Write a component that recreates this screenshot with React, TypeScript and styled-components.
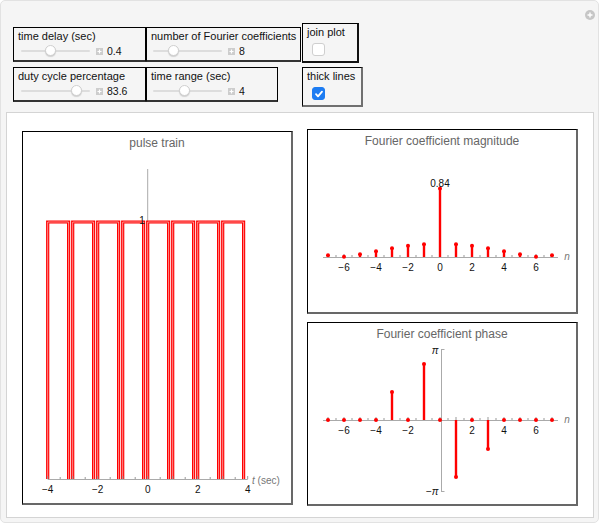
import styled, { createGlobalStyle } from "styled-components";

const GlobalStyle = createGlobalStyle`
  body {
    margin: 0;
    background: #ffffff;
    font-family: "Liberation Sans", Arial, sans-serif;
  }
`;

const DUTY = 0.836;

type SliderProps = { label: string; value: string; pos: number; w: number; pad: number };

function Slider({ label, value, pos, w, pad }: SliderProps) {
  return (
    <ControlBox $w={w}>
      <Label>{label}</Label>
      <SliderRow $pad={pad}>
        <Track>
          <Thumb style={{ left: `${pos * 100}%` }} />
        </Track>
        <PlusBox>
          <svg width="7" height="7" viewBox="0 0 7 7">
            <path d="M3.5 1.5v4M1.5 3.5h4" stroke="#fff" strokeWidth="1.2" />
          </svg>
        </PlusBox>
        <Value>{value}</Value>
      </SliderRow>
    </ControlBox>
  );
}

function Toggle({ label, checked, w, h, muted }: { label: string; checked: boolean; w: number; h: number; muted?: boolean }) {
  return (
    <CheckFrame $w={w} $h={h} $muted={muted}>
      <Label>{label}</Label>
      <Check $on={checked}>
        {checked && (
          <svg width="10" height="10" viewBox="0 0 10 10">
            <path d="M2 5.2l2 2.2 4-4.8" fill="none" stroke="#fff" strokeWidth="1.8" strokeLinecap="round" strokeLinejoin="round" />
          </svg>
        )}
      </Check>
    </CheckFrame>
  );
}

function PulseTrain() {
  const x0 = 124.7, ts = 25, y0 = 327, y1 = 70;
  const tx = (t: number) => x0 + t * ts;
  // one open box per period, the low part sits on the axis
  let d = "";
  for (let k = -4; k <= 3; k++) {
    d += ` M${tx(k)},${y0} L${tx(k)},${y1} L${tx(k + DUTY)},${y1} L${tx(k + DUTY)},${y0}`;
  }
  const ticks: number[] = [];
  for (let t = -4; t <= 4; t += 0.5) ticks.push(t);
  return (
    <svg width="268" height="351">
      <line x1={tx(0)} y1="17" x2={tx(0)} y2={y0} stroke="#aaa" />
      <path d={d} fill="none" stroke="#ff0000" strokeWidth="3.2" strokeLinejoin="miter" />
      <path d={d} fill="none" stroke="#ffb4b4" strokeWidth="0.8" />
      <line x1={tx(-4)} y1={y0 + 0.5} x2={tx(4)} y2={y0 + 0.5} stroke="#aaa" />
      {ticks.map((t) => (
        <line key={t} x1={tx(t)} y1={y0} x2={tx(t)} y2={y0 - (Number.isInteger(t) ? 3 : 2)} stroke="#999" />
      ))}
      <AxisText x={tx(0) - 3} y={y1 + 2} textAnchor="end" fontSize="9">1</AxisText>
      {[-4, -2, 0, 2, 4].map((t) => (
        <AxisText key={t} x={tx(t)} y="341" textAnchor="middle">
          {t < 0 ? `−${-t}` : t}
        </AxisText>
      ))}
      <AxisName x="229" y="332">
        <tspan fontStyle="italic">t</tspan> (sec)
      </AxisName>
    </svg>
  );
}

const NS = [-7, -6, -5, -4, -3, -2, -1, 0, 1, 2, 3, 4, 5, 6, 7];
const nx = (n: number) => 132 + n * 16;

function AxisN({ y, labels }: { y: number; labels: number[] }) {
  const ticks: number[] = [];
  for (let n = -7; n <= 7.4; n += 0.5) ticks.push(n);
  return (
    <g>
      <line x1="15" y1={y + 0.5} x2="250" y2={y + 0.5} stroke="#aaa" />
      {ticks.map((n) => (
        <line key={n} x1={nx(n)} y1={y} x2={nx(n)} y2={y - (Number.isInteger(n) ? 3 : 2)} stroke="#999" />
      ))}
      {labels.map((n) => (
        <AxisText key={n} x={nx(n)} y={y + 14} textAnchor="middle">
          {n < 0 ? `−${-n}` : n}
        </AxisText>
      ))}
      <AxisName x="259" y={y + 3} fontStyle="italic" textAnchor="middle">n</AxisName>
    </g>
  );
}

function Magnitude() {
  const ay = 107, scale = 82;
  const mag = (n: number) => (n === 0 ? DUTY : Math.abs(Math.sin(Math.PI * n * DUTY)) / (Math.PI * Math.abs(n)));
  return (
    <svg width="268" height="162">
      <AxisN y={ay} labels={[-6, -4, -2, 0, 2, 4, 6]} />
      {NS.map((n) => {
        const top = ay - mag(n) * scale;
        return (
          <g key={n}>
            <line x1={nx(n)} y1={ay} x2={nx(n)} y2={top} stroke="#ff0000" strokeWidth="2.4" />
            <circle cx={nx(n)} cy={top} r="2" fill="#ff0000" />
          </g>
        );
      })}
      <AxisText x={nx(0)} y="37" textAnchor="middle">0.84</AxisText>
    </svg>
  );
}

const PHASE: Record<number, number> = { [-3]: 28, [-1]: 56, 1: -57, 3: -29 };

function Phase() {
  const ay = 77, yx = 133.5;
  return (
    <svg width="268" height="161">
      <line x1={yx} y1="6" x2={yx} y2="149" stroke="#aaa" />
      <line x1={yx} y1="6.5" x2={yx + 3} y2="6.5" stroke="#aaa" />
      <line x1={yx} y1="148.5" x2={yx + 3} y2="148.5" stroke="#aaa" />
      <AxisN y={ay} labels={[-6, -4, -2, 2, 4, 6]} />
      {NS.map((n) => {
        const top = ay - (PHASE[n] ?? 0);
        return (
          <g key={n}>
            <line x1={nx(n)} y1={ay} x2={nx(n)} y2={top} stroke="#ff0000" strokeWidth="2.4" />
            <circle cx={nx(n)} cy={top} r="2" fill="#ff0000" />
          </g>
        );
      })}
      <AxisText x={yx - 3} y="11" textAnchor="end" fontSize="11" fontStyle="italic">π</AxisText>
      <AxisText x={yx - 3} y="152" textAnchor="end" fontSize="11">
        −<tspan fontStyle="italic">π</tspan>
      </AxisText>
    </svg>
  );
}

export default function App() {
  return (
    <>
      <GlobalStyle />
      <Panel>
        <CornerButton>
          <svg width="10" height="10" viewBox="0 0 10 10">
            <circle cx="5" cy="5" r="5" fill="#c6c6c6" />
            <path d="M5 2.5v5M2.5 5h5" stroke="#fff" strokeWidth="1.4" />
          </svg>
        </CornerButton>
        <Controls>
          <SliderGrid>
            <Slider label="time delay (sec)" value="0.4" pos={0.43} w={133} pad={7} />
            <Slider label="number of Fourier coefficients" value="8" pos={0.29} w={155} pad={6} />
            <Slider label="duty cycle percentage" value="83.6" pos={0.8} w={133} pad={7} />
            <Slider label="time range (sec)" value="4" pos={0.46} w={132} pad={6} />
          </SliderGrid>
          <CheckColumn>
            <Toggle label="join plot" checked={false} w={57} h={40} />
            <Toggle label="thick lines" checked w={61} h={40} muted />
          </CheckColumn>
        </Controls>
        <Content>
          <PlotFrame $w={271} $h={374} $offset={2}>
            <Caption>pulse train</Caption>
            <PulseTrain />
          </PlotFrame>
          <PlotColumn>
            <PlotFrame $w={271} $h={185}>
              <Caption>Fourier coefficient magnitude</Caption>
              <Magnitude />
            </PlotFrame>
            <PlotFrame $w={271} $h={184}>
              <Caption>Fourier coefficient phase</Caption>
              <Phase />
            </PlotFrame>
          </PlotColumn>
        </Content>
      </Panel>
    </>
  );
}

const Panel = styled.div`
  position: relative;
  width: 599px;
  height: 523px;
  box-sizing: border-box;
  background: #f5f5f5;
  border: 1px solid #e2e2e2;
  border-radius: 5px;
  padding: 0 4px 0 5px;
`;

const CornerButton = styled.div`
  position: absolute;
  top: 9px;
  right: 3px;
  width: 10px;
  height: 10px;
  svg {
    display: block;
  }
`;

const Controls = styled.div`
  display: flex;
  align-items: flex-start;
  gap: 1px;
  padding: 22px 0 0 7px;
  height: 107px;
  box-sizing: border-box;
`;

const SliderGrid = styled.div`
  display: grid;
  grid-template-columns: auto auto;
  justify-items: start;
  row-gap: 5px;
  margin-top: 4px;
`;

const ControlBox = styled.div<{ $w: number }>`
  width: ${(p) => p.$w}px;
  height: 35px;
  box-sizing: border-box;
  border: 1px solid #000;
  border-bottom: 2px solid #333;
  background: #f5f5f5;
`;

const Label = styled.div`
  font-size: 11px;
  line-height: 13px;
  color: #111;
  padding: 2px 0 0 4px;
  white-space: nowrap;
`;

const SliderRow = styled.div<{ $pad: number }>`
  display: flex;
  align-items: center;
  height: 14px;
  margin-top: 1px;
  padding-left: ${(p) => p.$pad}px;
`;

const Track = styled.div`
  position: relative;
  width: 69px;
  height: 2px;
  border-radius: 1px;
  background: #dddddd;
`;

const Thumb = styled.div`
  position: absolute;
  top: -5px;
  width: 11px;
  height: 11px;
  margin-left: -5.5px;
  box-sizing: border-box;
  border-radius: 50%;
  background: #fff;
  border: 1px solid #cfcfcf;
  box-shadow: 0 1px 1px rgba(0, 0, 0, 0.15);
`;

const PlusBox = styled.div`
  width: 7px;
  height: 7px;
  margin-left: 6px;
  background: #cdcdcd;
  svg {
    display: block;
  }
`;

const Value = styled.span`
  margin-left: 4px;
  font-size: 10.5px;
  color: #111;
`;

const CheckColumn = styled.div`
  display: flex;
  flex-direction: column;
  gap: 4px;
`;

const CheckFrame = styled.div<{ $w: number; $h: number; $muted?: boolean }>`
  width: ${(p) => p.$w}px;
  height: ${(p) => p.$h}px;
  box-sizing: border-box;
  border: 1px solid #000;
  border-right: 2px solid ${(p) => (p.$muted ? "#707070" : "#111")};
  border-bottom: 2px solid ${(p) => (p.$muted ? "#707070" : "#111")};
`;

const Check = styled.div<{ $on: boolean }>`
  width: 13px;
  height: 13px;
  margin: 4px 0 0 9px;
  box-sizing: border-box;
  border-radius: 3px;
  display: flex;
  align-items: center;
  justify-content: center;
  background: ${(p) => (p.$on ? "#1d7cf2" : "#fff")};
  border: 1px solid ${(p) => (p.$on ? "#1d7cf2" : "#cfcfcf")};
`;

const Content = styled.div`
  display: flex;
  align-items: flex-start;
  gap: 14px;
  margin-top: 4px;
  width: 588px;
  height: 406px;
  box-sizing: border-box;
  padding: 16px 0 0 15px;
  background: #fff;
  border: 1px solid #d4d4d4;
`;

const PlotColumn = styled.div`
  display: flex;
  flex-direction: column;
  gap: 8px;
`;

const PlotFrame = styled.div<{ $w: number; $h: number; $offset?: number }>`
  width: ${(p) => p.$w}px;
  height: ${(p) => p.$h}px;
  margin-top: ${(p) => p.$offset ?? 0}px;
  box-sizing: border-box;
  border-top: 1px solid #000;
  border-left: 1px solid #000;
  border-right: 2px solid #686868;
  border-bottom: 2px solid #686868;
  background: #fff;
  svg {
    display: block;
  }
`;

const Caption = styled.div`
  height: 20px;
  box-sizing: border-box;
  padding-top: 4px;
  text-align: center;
  font-size: 12px;
  line-height: 14px;
  color: #666;
`;

const AxisText = styled.text`
  font-family: "Liberation Sans", Arial, sans-serif;
  font-size: 10px;
  fill: #111;
`;

const AxisName = styled.text`
  font-family: "Liberation Sans", Arial, sans-serif;
  font-size: 10px;
  fill: #777;
`;
